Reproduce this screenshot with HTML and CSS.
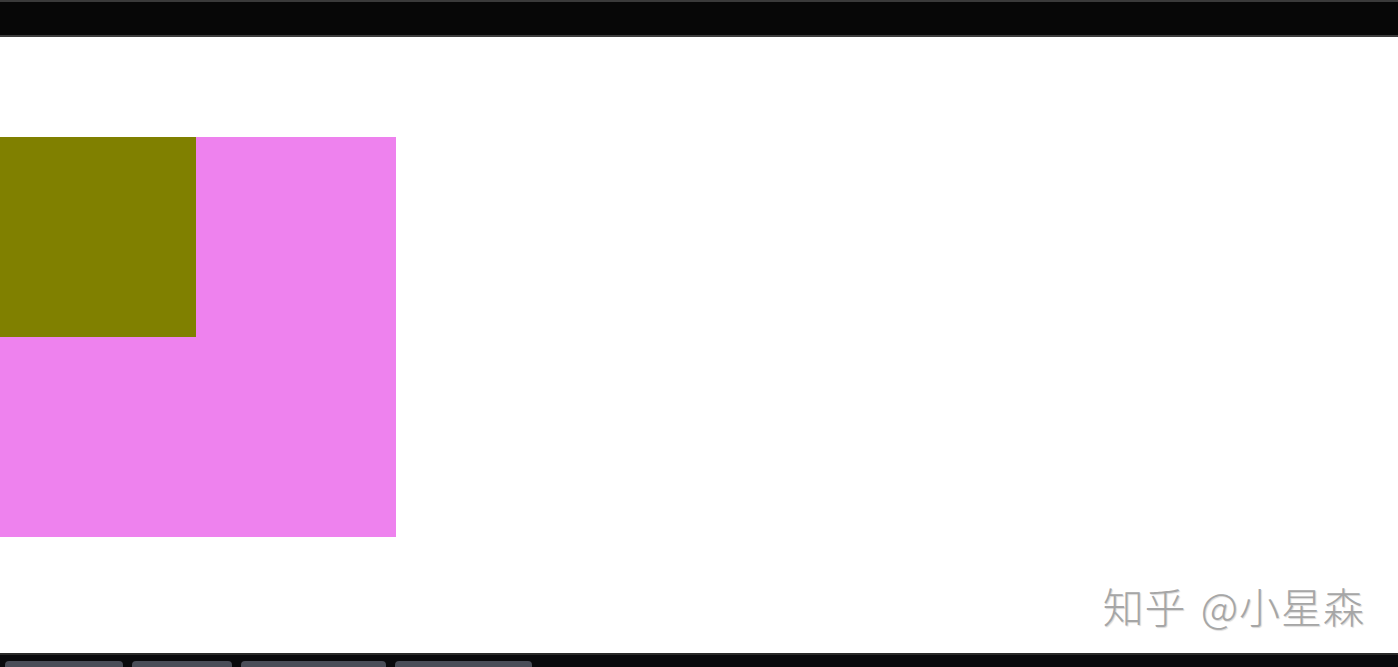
FILE: index.html
```html
<!DOCTYPE html>
<html lang="zh">
<head>
<meta charset="utf-8">
<title>Demo</title>
<link rel="stylesheet" href="styles.css">
</head>
<body>
<div class="app">
  <header class="topbar"></header>
  <main class="stage">
    <div class="outer">
      <div class="inner"></div>
    </div>
    <div class="watermark">知乎 @小星森</div>
  </main>
  <footer class="bottombar">
    <div class="tab tab1"></div>
    <div class="tab tab2"></div>
    <div class="tab tab3"></div>
    <div class="tab tab4"></div>
  </footer>
</div>
</body>
</html>
```

FILE: styles.css
```css
html, body {
  margin: 0;
  padding: 0;
  width: 1398px;
  height: 667px;
  overflow: hidden;
  background: #ffffff;
  font-family: "Noto Sans CJK SC", "Liberation Sans", sans-serif;
}
.app {
  display: flex;
  flex-direction: column;
  height: 667px;
}
.topbar {
  background: #070707;
  border-top: 2px solid #3a3a3a;
  border-bottom: 2px solid #3c3c3c;
  box-sizing: border-box;
  height: 37px;
}
.stage {
  position: relative;
  flex: 1;
  background: #ffffff;
  padding-top: 100px;
  box-sizing: border-box;
}
.outer {
  width: 396px;
  height: 400px;
  background: #ee82ee;
}
.inner {
  width: 196px;
  height: 200px;
  background: #808000;
}
.watermark {
  position: absolute;
  right: 33px;
  top: 540px;
  font-size: 41px;
  font-weight: 300;
  line-height: 56px;
  color: #a6a6a6;
  letter-spacing: 1px;
  word-spacing: 4px;
  text-shadow: 1px 1px 1px #d8d8d8, -1px -1px 0 #ffffff;
}
.bottombar {
  height: 14px;
  background: #0a0a0d;
  border-top: 2px solid #2a2a2a;
  box-sizing: border-box;
  display: flex;
  align-items: flex-end;
  padding-left: 5px;
  gap: 9px;
}
.tab {
  height: 6px;
  background: #4a4d58;
  border-radius: 4px 4px 0 0;
}
.tab1 { width: 118px; }
.tab2 { width: 100px; }
.tab3 { width: 145px; }
.tab4 { width: 137px; }
```
